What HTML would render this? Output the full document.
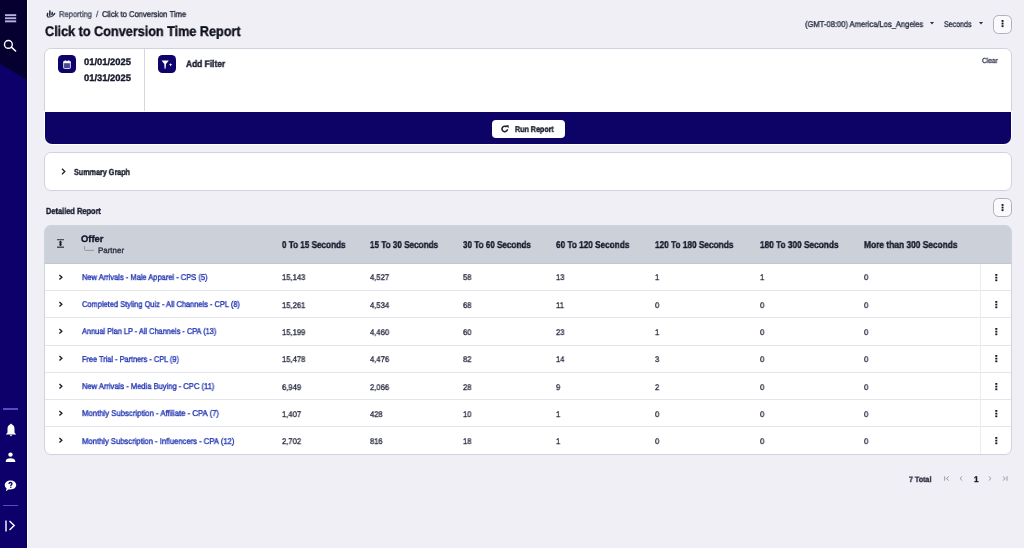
<!DOCTYPE html>
<html><head><meta charset="utf-8">
<style>
html,body{margin:0;padding:0;}
body{width:1024px;height:548px;overflow:hidden;position:relative;background:#efeff5;font-family:"Liberation Sans",sans-serif;}
.t{position:absolute;white-space:nowrap;line-height:1;transform-origin:0 0;text-rendering:geometricPrecision;will-change:transform;}
.ic{position:absolute;display:block;}
#sb{position:absolute;left:0;top:0;width:27px;height:548px;background:#0d006b;overflow:hidden;}
#sbtop{position:absolute;left:0;top:0;width:27px;height:548px;}
#sbedge{position:absolute;left:27px;top:0;width:1px;height:548px;background:#ffffff;}
.card{position:absolute;background:#fff;box-sizing:border-box;border:1px solid #d0d3db;}
#fc{left:44px;top:48px;width:968px;height:96px;border-radius:7px;overflow:hidden;}
#navy{position:absolute;left:45px;width:966px;top:112.4px;height:31.6px;background:#0d0266;border-radius:0 0 7px 7px;box-shadow:0 0 0 1px #fff;}
#vdiv{position:absolute;left:99px;top:0;width:1px;height:64px;background:#d5d7de;}
.ibox{position:absolute;width:18.2px;height:18.3px;border-radius:4.5px;background:#0e036b;}
#runbtn{position:absolute;left:446.9px;top:7.3px;width:73px;height:18px;border-radius:4px;background:#fff;}
#sc{left:44px;top:152px;width:968px;height:39px;border-radius:7px;}
#tbl{left:44px;top:225px;width:968px;height:230px;border-radius:7px;overflow:hidden;background:linear-gradient(#ccd0d9 0,#ccd0d9 20px,#fff 20px);}
#thead{position:absolute;left:0;top:0;right:0;height:38px;border-radius:6px 6px 0 0;background:#ccd0d9;border-bottom:1px solid #c3c7d1;box-sizing:border-box;}
.rl{position:absolute;left:0;right:0;height:1px;background:#e4e5ea;}
#adiv{position:absolute;left:935px;top:38px;width:1px;bottom:0;background:#ebecf0;}
.kbtn{position:absolute;box-sizing:border-box;border:1.2px solid #aeb2be;border-radius:5.5px;background:#fafafc;}
</style></head><body>
<div id="sb">
  <svg id="sbtop" width="27" height="548" viewBox="0 0 27 548"><polygon points="0,0 27,0 27,79.8 0,63.8" fill="#060031"/></svg>
  <!-- hamburger -->
  <svg class="ic" style="left:4.8px;top:13.7px" width="12" height="9" viewBox="0 0 12 9"><rect x="0" y="0.2" width="11.2" height="1.9" fill="#b8b0e0"/><rect x="0" y="3.3" width="11.2" height="1.9" fill="#b8b0e0"/><rect x="0" y="6.4" width="11.2" height="1.9" fill="#b8b0e0"/></svg>
  <!-- search -->
  <svg class="ic" style="left:3px;top:38.8px" width="14" height="13" viewBox="0 0 14 13"><circle cx="5.4" cy="5.4" r="3.9" fill="none" stroke="#fff" stroke-width="1.4"/><path d="M8.4 8.1 L12.6 12" stroke="#fff" stroke-width="1.5" stroke-linecap="round"/></svg>
  <!-- dividers -->
  <div style="position:absolute;left:3px;top:408.4px;width:15px;height:1.6px;background:#5a4cc0"></div>
  <div style="position:absolute;left:3px;top:504.7px;width:15px;height:1.6px;background:#5a4cc0"></div>
  <!-- bell -->
  <svg class="ic" style="left:4.5px;top:423px" width="12" height="14" viewBox="0 0 12 14"><path d="M6 0.4 L7.6 2 C8.9 2.6 9.5 4 9.5 6 L9.5 9.4 L11.2 11.4 L0.8 11.4 L2.5 9.4 L2.5 6 C2.5 4 3.1 2.6 4.4 2 Z" fill="#fff"/><circle cx="6" cy="12.4" r="0.8" fill="#fff"/></svg>
  <!-- person -->
  <svg class="ic" style="left:5px;top:452px" width="11" height="11" viewBox="0 0 11 11"><circle cx="5.5" cy="2.6" r="2.2" fill="#fff"/><path d="M0.6 10 C0.6 7.3 2.6 6.3 5.5 6.3 C8.4 6.3 10.4 7.3 10.4 10 Z" fill="#fff"/></svg>
  <!-- help -->
  <svg class="ic" style="left:4px;top:479.5px" width="13" height="12" viewBox="0 0 13 12"><path d="M6.5 0.5 C9.8 0.5 12.2 2.4 12.2 5 C12.2 7.6 9.8 9.4 6.5 9.4 C5.9 9.4 5.4 9.3 4.9 9.2 L2 11.3 L2.6 8.4 C1.4 7.5 0.8 6.3 0.8 5 C0.8 2.4 3.2 0.5 6.5 0.5 Z" fill="#fff"/><path d="M5 3.9 C5 3 5.7 2.5 6.5 2.5 C7.4 2.5 8 3.1 8 3.8 C8 4.8 6.8 4.9 6.8 5.9" fill="none" stroke="#0f0370" stroke-width="1.3"/><circle cx="6.8" cy="7.3" r="0.75" fill="#0f0370"/></svg>
  <!-- expand -->
  <svg class="ic" style="left:5px;top:520px" width="11" height="12" viewBox="0 0 11 12"><path d="M1 0.5 L1 11.5" stroke="#fff" stroke-width="1.4"/><path d="M4.5 1 L9.2 5.5 L4.5 10" fill="none" stroke="#fff" stroke-width="1.4"/></svg>
</div>
<div id="sbedge"></div>
<div style="position:absolute;left:25.6px;top:0;width:1.4px;height:548px;background:rgba(0,0,20,0.3)"></div>

<!-- breadcrumb icon -->
<svg class="ic" style="left:45.5px;top:9.5px" width="10" height="8" viewBox="0 0 10 8"><path d="M1.6 3.6 L1.3 5.6 M3.9 1 L3.8 5.2 M6.2 2.6 L6 4.8 M8.6 3.6 L7.8 4.6" stroke="#23263a" stroke-width="1.5" stroke-linecap="round"/><path d="M1 6.4 Q4 8 7.6 5.4" fill="none" stroke="#23263a" stroke-width="1.1"/></svg>
<!-- caret timezone -->
<svg class="ic" style="left:930.3px;top:22.2px" width="4" height="3" viewBox="0 0 4 3"><path d="M0 0 L4 0 L2 2.6 Z" fill="#2a2d40"/></svg>
<svg class="ic" style="left:979px;top:22.2px" width="4" height="3" viewBox="0 0 4 3"><path d="M0 0 L4 0 L2 2.6 Z" fill="#2a2d40"/></svg>
<div class="kbtn" style="left:993px;top:15px;width:19px;height:19px"></div>
<svg class="ic" style="left:1001px;top:20px" width="3" height="8" viewBox="0 0 3 8"><rect x="0.6" y="0" width="1.9" height="1.9" fill="#15182a"/><rect x="0.6" y="2.6" width="1.9" height="1.9" fill="#15182a"/><rect x="0.6" y="5.2" width="1.9" height="1.9" fill="#15182a"/></svg>

<div class="card" id="fc">
  <div id="vdiv"></div>
  <div class="ibox" style="left:13.2px;top:6.2px"></div>
  <div class="ibox" style="left:112.7px;top:6.2px"></div>
</div>
<div id="navy"><div id="runbtn"></div></div>
<!-- calendar icon -->
<svg class="ic" style="left:63px;top:60px" width="8" height="9" viewBox="0 0 8 9"><rect x="0.6" y="1.3" width="6.8" height="7.2" rx="0.8" fill="#4a4595" stroke="#e8e6f6" stroke-width="0.9"/><rect x="0.6" y="1.3" width="6.8" height="1.9" fill="#fff"/><rect x="1.8" y="0.4" width="1" height="1.6" fill="#fff"/><rect x="5.2" y="0.4" width="1" height="1.6" fill="#fff"/></svg>
<!-- filter icon -->
<svg class="ic" style="left:161px;top:60px" width="12" height="9" viewBox="0 0 12 9"><path d="M0.6 0.4 L7.8 0.4 L5 3.9 L4.6 8.7 L3.6 8.7 L3.3 3.9 Z" fill="#fff"/><path d="M9.6 3 L10.1 4.3 L11.4 4.8 L10.1 5.3 L9.6 6.6 L9.1 5.3 L7.8 4.8 L9.1 4.3 Z" fill="#fff"/></svg>
<!-- run report icon -->
<svg class="ic" style="left:500.5px;top:124.8px" width="8" height="8" viewBox="0 0 8 8"><path d="M6.5 4.2 A2.75 2.75 0 1 1 5.6 1.9" fill="none" stroke="#1b1e30" stroke-width="1.5"/><path d="M4.5 0.2 L7.6 0.2 L7.6 3.3 Z" fill="#1b1e30"/></svg>

<div class="card" id="sc"></div>
<svg class="ic" style="left:61px;top:167.8px" width="5" height="7" viewBox="0 0 5 7"><path d="M1 0.8 L3.8 3.5 L1 6.2" fill="none" stroke="#1b1e30" stroke-width="1.3"/></svg>

<div class="kbtn" style="left:993px;top:198px;width:19px;height:19px"></div>
<svg class="ic" style="left:1001px;top:204px" width="3" height="8" viewBox="0 0 3 8"><rect x="0.6" y="0" width="1.9" height="1.9" fill="#15182a"/><rect x="0.6" y="2.6" width="1.9" height="1.9" fill="#15182a"/><rect x="0.6" y="5.2" width="1.9" height="1.9" fill="#15182a"/></svg>

<div class="card" id="tbl">
  <div id="thead"></div>
  <div class="rl" style="top:64.20px"></div><div class="rl" style="top:91.40px"></div><div class="rl" style="top:118.60px"></div><div class="rl" style="top:145.80px"></div><div class="rl" style="top:173.00px"></div><div class="rl" style="top:200.20px"></div>
  <div id="adiv"></div>
</div>
<!-- sort icon -->
<svg class="ic" style="left:57px;top:239.3px" width="8" height="9" viewBox="0 0 8 9"><rect x="0" y="0.3" width="7" height="0.9" fill="#1b1e30"/><rect x="0" y="7.6" width="7" height="1.1" fill="#1b1e30"/><path d="M3.5 1.6 L5.3 3.4 L4.4 3.4 L4.4 5.4 L5.3 5.4 L3.5 7.2 L1.7 5.4 L2.6 5.4 L2.6 3.4 L1.7 3.4 Z" fill="#1b1e30"/></svg>
<!-- tree line -->
<svg class="ic" style="left:84px;top:246px" width="11" height="6" viewBox="0 0 11 6"><path d="M0.5 0.2 L0.5 3.4 Q0.5 4.4 1.6 4.4 L10 4.4" fill="none" stroke="#80848f" stroke-width="0.75"/></svg>
<svg class="ic" style="left:58px;top:273.70px" width="6" height="7" viewBox="0 0 6 7"><path d="M1.4 0.9 L3.9 3.2 L1.4 5.6" fill="none" stroke="#1b1e30" stroke-width="1.35"/></svg><svg class="ic" style="left:58px;top:300.90px" width="6" height="7" viewBox="0 0 6 7"><path d="M1.4 0.9 L3.9 3.2 L1.4 5.6" fill="none" stroke="#1b1e30" stroke-width="1.35"/></svg><svg class="ic" style="left:58px;top:328.10px" width="6" height="7" viewBox="0 0 6 7"><path d="M1.4 0.9 L3.9 3.2 L1.4 5.6" fill="none" stroke="#1b1e30" stroke-width="1.35"/></svg><svg class="ic" style="left:58px;top:355.30px" width="6" height="7" viewBox="0 0 6 7"><path d="M1.4 0.9 L3.9 3.2 L1.4 5.6" fill="none" stroke="#1b1e30" stroke-width="1.35"/></svg><svg class="ic" style="left:58px;top:382.50px" width="6" height="7" viewBox="0 0 6 7"><path d="M1.4 0.9 L3.9 3.2 L1.4 5.6" fill="none" stroke="#1b1e30" stroke-width="1.35"/></svg><svg class="ic" style="left:58px;top:409.70px" width="6" height="7" viewBox="0 0 6 7"><path d="M1.4 0.9 L3.9 3.2 L1.4 5.6" fill="none" stroke="#1b1e30" stroke-width="1.35"/></svg><svg class="ic" style="left:58px;top:436.90px" width="6" height="7" viewBox="0 0 6 7"><path d="M1.4 0.9 L3.9 3.2 L1.4 5.6" fill="none" stroke="#1b1e30" stroke-width="1.35"/></svg>
<svg class="ic" style="left:994.6px;top:273.80px" width="3" height="8" viewBox="0 0 3 8"><rect x="0.3" y="0" width="2.0" height="1.8" fill="#15182a"/><rect x="0.3" y="2.7" width="2.0" height="1.8" fill="#15182a"/><rect x="0.3" y="5.4" width="2.0" height="1.8" fill="#15182a"/></svg><svg class="ic" style="left:994.6px;top:301.00px" width="3" height="8" viewBox="0 0 3 8"><rect x="0.3" y="0" width="2.0" height="1.8" fill="#15182a"/><rect x="0.3" y="2.7" width="2.0" height="1.8" fill="#15182a"/><rect x="0.3" y="5.4" width="2.0" height="1.8" fill="#15182a"/></svg><svg class="ic" style="left:994.6px;top:328.20px" width="3" height="8" viewBox="0 0 3 8"><rect x="0.3" y="0" width="2.0" height="1.8" fill="#15182a"/><rect x="0.3" y="2.7" width="2.0" height="1.8" fill="#15182a"/><rect x="0.3" y="5.4" width="2.0" height="1.8" fill="#15182a"/></svg><svg class="ic" style="left:994.6px;top:355.40px" width="3" height="8" viewBox="0 0 3 8"><rect x="0.3" y="0" width="2.0" height="1.8" fill="#15182a"/><rect x="0.3" y="2.7" width="2.0" height="1.8" fill="#15182a"/><rect x="0.3" y="5.4" width="2.0" height="1.8" fill="#15182a"/></svg><svg class="ic" style="left:994.6px;top:382.60px" width="3" height="8" viewBox="0 0 3 8"><rect x="0.3" y="0" width="2.0" height="1.8" fill="#15182a"/><rect x="0.3" y="2.7" width="2.0" height="1.8" fill="#15182a"/><rect x="0.3" y="5.4" width="2.0" height="1.8" fill="#15182a"/></svg><svg class="ic" style="left:994.6px;top:409.80px" width="3" height="8" viewBox="0 0 3 8"><rect x="0.3" y="0" width="2.0" height="1.8" fill="#15182a"/><rect x="0.3" y="2.7" width="2.0" height="1.8" fill="#15182a"/><rect x="0.3" y="5.4" width="2.0" height="1.8" fill="#15182a"/></svg><svg class="ic" style="left:994.6px;top:437.00px" width="3" height="8" viewBox="0 0 3 8"><rect x="0.3" y="0" width="2.0" height="1.8" fill="#15182a"/><rect x="0.3" y="2.7" width="2.0" height="1.8" fill="#15182a"/><rect x="0.3" y="5.4" width="2.0" height="1.8" fill="#15182a"/></svg>
<!-- pagination -->
<svg class="ic" style="left:943.5px;top:476px" width="6" height="5" viewBox="0 0 6 5"><path d="M0.7 0.3 L0.7 4.7" stroke="#8d90a0" stroke-width="0.9"/><path d="M4.8 0.4 L2.4 2.5 L4.8 4.6" fill="none" stroke="#8d90a0" stroke-width="0.9"/></svg>
<svg class="ic" style="left:958.5px;top:476px" width="4" height="5" viewBox="0 0 4 5"><path d="M3.2 0.4 L1 2.5 L3.2 4.6" fill="none" stroke="#8d90a0" stroke-width="0.9"/></svg>
<svg class="ic" style="left:988px;top:476px" width="4" height="5" viewBox="0 0 4 5"><path d="M0.8 0.4 L3 2.5 L0.8 4.6" fill="none" stroke="#8d90a0" stroke-width="0.9"/></svg>
<svg class="ic" style="left:1002px;top:476px" width="6" height="5" viewBox="0 0 6 5"><path d="M0.8 0.4 L3.2 2.5 L0.8 4.6" fill="none" stroke="#8d90a0" stroke-width="0.9"/><path d="M5 0.3 L5 4.7" stroke="#8d90a0" stroke-width="0.9"/></svg>
<span class="t" style="left:58.90px;top:10.17px;font-size:8.3px;color:#4b4f64;-webkit-text-stroke:0.35px #4b4f64;transform:scaleX(0.9170);">Reporting</span>
<span class="t" style="left:95.80px;top:10.17px;font-size:8.3px;color:#5d6174;-webkit-text-stroke:0.35px #5d6174;">/</span>
<span class="t" style="left:101.90px;top:10.17px;font-size:8.3px;color:#23263a;-webkit-text-stroke:0.35px #23263a;transform:scaleX(0.9162);">Click to Conversion Time</span>
<span class="t" style="left:44.90px;top:24.46px;font-size:14.1px;color:#0c0e1a;font-weight:700;-webkit-text-stroke:0.35px #0c0e1a;transform:scaleX(0.8964);">Click to Conversion Time Report</span>
<span class="t" style="left:805.40px;top:19.79px;font-size:8.4px;color:#2d3145;-webkit-text-stroke:0.35px #2d3145;transform:scaleX(0.9040);">(GMT-08:00) America/Los_Angeles</span>
<span class="t" style="left:944.40px;top:19.79px;font-size:8.4px;color:#2d3145;-webkit-text-stroke:0.35px #2d3145;transform:scaleX(0.8412);">Seconds</span>
<span class="t" style="left:84.00px;top:57.44px;font-size:9.4px;color:#15182a;font-weight:700;-webkit-text-stroke:0.35px #15182a;">01/01/2025</span>
<span class="t" style="left:84.00px;top:73.04px;font-size:9.4px;color:#15182a;font-weight:700;-webkit-text-stroke:0.35px #15182a;">01/31/2025</span>
<span class="t" style="left:186.00px;top:60.47px;font-size:9.6px;color:#15182a;font-weight:700;-webkit-text-stroke:0.35px #15182a;transform:scaleX(0.8749);">Add Filter</span>
<span class="t" style="left:982.30px;top:56.53px;font-size:7.4px;color:#3d4155;-webkit-text-stroke:0.35px #3d4155;transform:scaleX(0.8934);">Clear</span>
<span class="t" style="left:515.00px;top:124.79px;font-size:8.4px;color:#15182a;font-weight:700;-webkit-text-stroke:0.35px #15182a;transform:scaleX(0.8507);">Run Report</span>
<span class="t" style="left:73.50px;top:167.95px;font-size:8.8px;color:#15182a;font-weight:700;-webkit-text-stroke:0.35px #15182a;transform:scaleX(0.8179);">Summary Graph</span>
<span class="t" style="left:46.20px;top:206.75px;font-size:8.8px;color:#15182a;font-weight:700;-webkit-text-stroke:0.35px #15182a;transform:scaleX(0.8442);">Detailed Report</span>
<span class="t" style="left:282.10px;top:240.71px;font-size:9.9px;color:#15182a;font-weight:700;-webkit-text-stroke:0.35px #15182a;transform:scaleX(0.8231);">0 To 15 Seconds</span>
<span class="t" style="left:370.20px;top:240.71px;font-size:9.9px;color:#15182a;font-weight:700;-webkit-text-stroke:0.35px #15182a;transform:scaleX(0.8227);">15 To 30 Seconds</span>
<span class="t" style="left:463.20px;top:240.71px;font-size:9.9px;color:#15182a;font-weight:700;-webkit-text-stroke:0.35px #15182a;transform:scaleX(0.8202);">30 To 60 Seconds</span>
<span class="t" style="left:556.00px;top:240.71px;font-size:9.9px;color:#15182a;font-weight:700;-webkit-text-stroke:0.35px #15182a;transform:scaleX(0.8325);">60 To 120 Seconds</span>
<span class="t" style="left:655.10px;top:240.71px;font-size:9.9px;color:#15182a;font-weight:700;-webkit-text-stroke:0.35px #15182a;transform:scaleX(0.8359);">120 To 180 Seconds</span>
<span class="t" style="left:759.70px;top:240.71px;font-size:9.9px;color:#15182a;font-weight:700;-webkit-text-stroke:0.35px #15182a;transform:scaleX(0.8380);">180 To 300 Seconds</span>
<span class="t" style="left:864.40px;top:240.71px;font-size:9.9px;color:#15182a;font-weight:700;-webkit-text-stroke:0.35px #15182a;transform:scaleX(0.8482);">More than 300 Seconds</span>
<span class="t" style="left:81.40px;top:233.64px;font-size:9.4px;color:#12152a;font-weight:700;-webkit-text-stroke:0.35px #12152a;">Offer</span>
<span class="t" style="left:97.50px;top:246.81px;font-size:7.9px;color:#2e3144;-webkit-text-stroke:0.35px #2e3144;transform:scaleX(1.0066);">Partner</span>
<span class="t" style="left:81.80px;top:272.87px;font-size:8.3px;color:#2235b2;-webkit-text-stroke:0.35px #2235b2;transform:scaleX(0.9040);">New Arrivals - Male Apparel - CPS (5)</span>
<span class="t" style="left:281.90px;top:274.35px;font-size:8.2px;color:#23263a;-webkit-text-stroke:0.3px #23263a;transform:scaleX(0.9300);">15,143</span>
<span class="t" style="left:370.00px;top:274.35px;font-size:8.2px;color:#23263a;-webkit-text-stroke:0.3px #23263a;transform:scaleX(0.9300);">4,527</span>
<span class="t" style="left:463.00px;top:274.35px;font-size:8.2px;color:#23263a;-webkit-text-stroke:0.3px #23263a;transform:scaleX(0.9300);">58</span>
<span class="t" style="left:555.80px;top:274.35px;font-size:8.2px;color:#23263a;-webkit-text-stroke:0.3px #23263a;transform:scaleX(0.9300);">13</span>
<span class="t" style="left:654.90px;top:274.35px;font-size:8.2px;color:#23263a;-webkit-text-stroke:0.3px #23263a;transform:scaleX(0.9300);">1</span>
<span class="t" style="left:759.50px;top:274.35px;font-size:8.2px;color:#23263a;-webkit-text-stroke:0.3px #23263a;transform:scaleX(0.9300);">1</span>
<span class="t" style="left:864.20px;top:274.35px;font-size:8.2px;color:#23263a;-webkit-text-stroke:0.3px #23263a;transform:scaleX(0.9300);">0</span>
<span class="t" style="left:81.80px;top:300.17px;font-size:8.3px;color:#2235b2;-webkit-text-stroke:0.35px #2235b2;transform:scaleX(0.8982);">Completed Styling Quiz - All Channels - CPL (8)</span>
<span class="t" style="left:281.90px;top:301.65px;font-size:8.2px;color:#23263a;-webkit-text-stroke:0.3px #23263a;transform:scaleX(0.9300);">15,261</span>
<span class="t" style="left:370.00px;top:301.65px;font-size:8.2px;color:#23263a;-webkit-text-stroke:0.3px #23263a;transform:scaleX(0.9300);">4,534</span>
<span class="t" style="left:463.00px;top:301.65px;font-size:8.2px;color:#23263a;-webkit-text-stroke:0.3px #23263a;transform:scaleX(0.9300);">68</span>
<span class="t" style="left:555.80px;top:301.65px;font-size:8.2px;color:#23263a;-webkit-text-stroke:0.3px #23263a;transform:scaleX(0.9300);">11</span>
<span class="t" style="left:654.90px;top:301.65px;font-size:8.2px;color:#23263a;-webkit-text-stroke:0.3px #23263a;transform:scaleX(0.9300);">0</span>
<span class="t" style="left:759.50px;top:301.65px;font-size:8.2px;color:#23263a;-webkit-text-stroke:0.3px #23263a;transform:scaleX(0.9300);">0</span>
<span class="t" style="left:864.20px;top:301.65px;font-size:8.2px;color:#23263a;-webkit-text-stroke:0.3px #23263a;transform:scaleX(0.9300);">0</span>
<span class="t" style="left:81.80px;top:327.47px;font-size:8.3px;color:#2235b2;-webkit-text-stroke:0.35px #2235b2;transform:scaleX(0.8893);">Annual Plan LP - All Channels - CPA (13)</span>
<span class="t" style="left:281.90px;top:328.95px;font-size:8.2px;color:#23263a;-webkit-text-stroke:0.3px #23263a;transform:scaleX(0.9300);">15,199</span>
<span class="t" style="left:370.00px;top:328.95px;font-size:8.2px;color:#23263a;-webkit-text-stroke:0.3px #23263a;transform:scaleX(0.9300);">4,460</span>
<span class="t" style="left:463.00px;top:328.95px;font-size:8.2px;color:#23263a;-webkit-text-stroke:0.3px #23263a;transform:scaleX(0.9300);">60</span>
<span class="t" style="left:555.80px;top:328.95px;font-size:8.2px;color:#23263a;-webkit-text-stroke:0.3px #23263a;transform:scaleX(0.9300);">23</span>
<span class="t" style="left:654.90px;top:328.95px;font-size:8.2px;color:#23263a;-webkit-text-stroke:0.3px #23263a;transform:scaleX(0.9300);">1</span>
<span class="t" style="left:759.50px;top:328.95px;font-size:8.2px;color:#23263a;-webkit-text-stroke:0.3px #23263a;transform:scaleX(0.9300);">0</span>
<span class="t" style="left:864.20px;top:328.95px;font-size:8.2px;color:#23263a;-webkit-text-stroke:0.3px #23263a;transform:scaleX(0.9300);">0</span>
<span class="t" style="left:81.80px;top:354.77px;font-size:8.3px;color:#2235b2;-webkit-text-stroke:0.35px #2235b2;transform:scaleX(0.8853);">Free Trial - Partners - CPL (9)</span>
<span class="t" style="left:281.90px;top:356.25px;font-size:8.2px;color:#23263a;-webkit-text-stroke:0.3px #23263a;transform:scaleX(0.9300);">15,478</span>
<span class="t" style="left:370.00px;top:356.25px;font-size:8.2px;color:#23263a;-webkit-text-stroke:0.3px #23263a;transform:scaleX(0.9300);">4,476</span>
<span class="t" style="left:463.00px;top:356.25px;font-size:8.2px;color:#23263a;-webkit-text-stroke:0.3px #23263a;transform:scaleX(0.9300);">82</span>
<span class="t" style="left:555.80px;top:356.25px;font-size:8.2px;color:#23263a;-webkit-text-stroke:0.3px #23263a;transform:scaleX(0.9300);">14</span>
<span class="t" style="left:654.90px;top:356.25px;font-size:8.2px;color:#23263a;-webkit-text-stroke:0.3px #23263a;transform:scaleX(0.9300);">3</span>
<span class="t" style="left:759.50px;top:356.25px;font-size:8.2px;color:#23263a;-webkit-text-stroke:0.3px #23263a;transform:scaleX(0.9300);">0</span>
<span class="t" style="left:864.20px;top:356.25px;font-size:8.2px;color:#23263a;-webkit-text-stroke:0.3px #23263a;transform:scaleX(0.9300);">0</span>
<span class="t" style="left:81.80px;top:382.07px;font-size:8.3px;color:#2235b2;-webkit-text-stroke:0.35px #2235b2;transform:scaleX(0.9123);">New Arrivals - Media Buying - CPC (11)</span>
<span class="t" style="left:281.90px;top:383.55px;font-size:8.2px;color:#23263a;-webkit-text-stroke:0.3px #23263a;transform:scaleX(0.9300);">6,949</span>
<span class="t" style="left:370.00px;top:383.55px;font-size:8.2px;color:#23263a;-webkit-text-stroke:0.3px #23263a;transform:scaleX(0.9300);">2,066</span>
<span class="t" style="left:463.00px;top:383.55px;font-size:8.2px;color:#23263a;-webkit-text-stroke:0.3px #23263a;transform:scaleX(0.9300);">28</span>
<span class="t" style="left:555.80px;top:383.55px;font-size:8.2px;color:#23263a;-webkit-text-stroke:0.3px #23263a;transform:scaleX(0.9300);">9</span>
<span class="t" style="left:654.90px;top:383.55px;font-size:8.2px;color:#23263a;-webkit-text-stroke:0.3px #23263a;transform:scaleX(0.9300);">2</span>
<span class="t" style="left:759.50px;top:383.55px;font-size:8.2px;color:#23263a;-webkit-text-stroke:0.3px #23263a;transform:scaleX(0.9300);">0</span>
<span class="t" style="left:864.20px;top:383.55px;font-size:8.2px;color:#23263a;-webkit-text-stroke:0.3px #23263a;transform:scaleX(0.9300);">0</span>
<span class="t" style="left:81.80px;top:409.37px;font-size:8.3px;color:#2235b2;-webkit-text-stroke:0.35px #2235b2;transform:scaleX(0.9329);">Monthly Subscription - Affiliate - CPA (7)</span>
<span class="t" style="left:281.90px;top:410.85px;font-size:8.2px;color:#23263a;-webkit-text-stroke:0.3px #23263a;transform:scaleX(0.9300);">1,407</span>
<span class="t" style="left:370.00px;top:410.85px;font-size:8.2px;color:#23263a;-webkit-text-stroke:0.3px #23263a;transform:scaleX(0.9300);">428</span>
<span class="t" style="left:463.00px;top:410.85px;font-size:8.2px;color:#23263a;-webkit-text-stroke:0.3px #23263a;transform:scaleX(0.9300);">10</span>
<span class="t" style="left:555.80px;top:410.85px;font-size:8.2px;color:#23263a;-webkit-text-stroke:0.3px #23263a;transform:scaleX(0.9300);">1</span>
<span class="t" style="left:654.90px;top:410.85px;font-size:8.2px;color:#23263a;-webkit-text-stroke:0.3px #23263a;transform:scaleX(0.9300);">0</span>
<span class="t" style="left:759.50px;top:410.85px;font-size:8.2px;color:#23263a;-webkit-text-stroke:0.3px #23263a;transform:scaleX(0.9300);">0</span>
<span class="t" style="left:864.20px;top:410.85px;font-size:8.2px;color:#23263a;-webkit-text-stroke:0.3px #23263a;transform:scaleX(0.9300);">0</span>
<span class="t" style="left:81.80px;top:436.67px;font-size:8.3px;color:#2235b2;-webkit-text-stroke:0.35px #2235b2;transform:scaleX(0.9205);">Monthly Subscription - Influencers - CPA (12)</span>
<span class="t" style="left:281.90px;top:438.15px;font-size:8.2px;color:#23263a;-webkit-text-stroke:0.3px #23263a;transform:scaleX(0.9300);">2,702</span>
<span class="t" style="left:370.00px;top:438.15px;font-size:8.2px;color:#23263a;-webkit-text-stroke:0.3px #23263a;transform:scaleX(0.9300);">816</span>
<span class="t" style="left:463.00px;top:438.15px;font-size:8.2px;color:#23263a;-webkit-text-stroke:0.3px #23263a;transform:scaleX(0.9300);">18</span>
<span class="t" style="left:555.80px;top:438.15px;font-size:8.2px;color:#23263a;-webkit-text-stroke:0.3px #23263a;transform:scaleX(0.9300);">1</span>
<span class="t" style="left:654.90px;top:438.15px;font-size:8.2px;color:#23263a;-webkit-text-stroke:0.3px #23263a;transform:scaleX(0.9300);">0</span>
<span class="t" style="left:759.50px;top:438.15px;font-size:8.2px;color:#23263a;-webkit-text-stroke:0.3px #23263a;transform:scaleX(0.9300);">0</span>
<span class="t" style="left:864.20px;top:438.15px;font-size:8.2px;color:#23263a;-webkit-text-stroke:0.3px #23263a;transform:scaleX(0.9300);">0</span>
<span class="t" style="left:909.10px;top:475.69px;font-size:7.8px;color:#2b2e40;font-weight:700;-webkit-text-stroke:0.35px #2b2e40;transform:scaleX(0.9082);">7 Total</span>
<span class="t" style="left:973.80px;top:475.55px;font-size:8.2px;color:#15182a;font-weight:700;-webkit-text-stroke:0.35px #15182a;">1</span>
</body></html>
